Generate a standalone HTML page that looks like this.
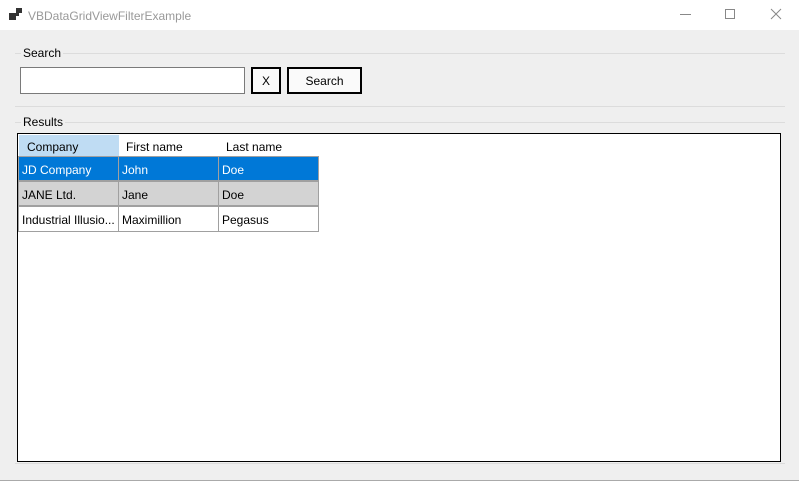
<!DOCTYPE html>
<html><head><style>
*{margin:0;padding:0;box-sizing:border-box}
body{width:799px;height:481px;background:#efefef;font-family:"Liberation Sans",sans-serif;font-size:12px;color:#000;position:relative;overflow:hidden}
.a{position:absolute}
.title{left:0;top:0;width:799px;height:30px;background:#fff}
.line{background:#dcdcdc;height:1px}
.cell{position:absolute;height:25px;line-height:26px;padding-left:3px;white-space:nowrap;overflow:hidden}
</style></head><body>
<div class="a title"></div>
<svg class="a" style="left:9px;top:8px" width="13" height="12"><rect x="0" y="5" width="7" height="7" fill="#333"/><rect x="7" y="0" width="6" height="5" fill="#333"/><rect x="7" y="5" width="3" height="3" fill="#333"/></svg>
<div class="a" style="left:28px;top:9px;color:#999;font-size:12px">VBDataGridViewFilterExample</div>
<div class="a" style="left:680px;top:14px;width:11px;height:1px;background:#888"></div>
<div class="a" style="left:725px;top:9px;width:10px;height:10px;border:1px solid #888"></div>
<svg class="a" style="left:770px;top:8px" width="12" height="12"><path d="M1 1L11 11M11 1L1 11" stroke="#888" stroke-width="1"/></svg>

<div class="a line" style="left:15px;top:53px;width:770px"></div>
<div class="a" style="left:21px;top:46px;background:#efefef;padding:0 2px">Search</div>
<div class="a" style="left:20px;top:67px;width:225px;height:27px;background:#fff;border:1px solid #7a7a7a"></div>
<div class="a" style="left:251px;top:67px;width:30px;height:27px;border:2px solid #000;text-align:center;line-height:25px;background:#fafafa">X</div>
<div class="a" style="left:287px;top:67px;width:75px;height:27px;border:2px solid #000;text-align:center;line-height:25px;background:#fafafa">Search</div>
<div class="a line" style="left:15px;top:106px;width:770px"></div>
<div class="a line" style="left:15px;top:122px;width:770px"></div>
<div class="a" style="left:21px;top:115px;background:#efefef;padding:0 2px">Results</div>

<div class="a" style="left:17px;top:133px;width:764px;height:329px;background:#fff;border:1px solid #000"></div>
<div class="a" style="left:19px;top:135px;width:100px;height:22px;background:#bfdcf3"></div>
<div class="a" style="left:27px;top:136px;line-height:22px">Company</div>
<div class="a" style="left:126px;top:136px;line-height:22px">First name</div>
<div class="a" style="left:226px;top:136px;line-height:22px">Last name</div>
<div class="a" style="left:18px;top:156px;width:301px;height:25px;background:#0078d7;border:1px solid #a0a0a0"></div>
<div class="a" style="left:18px;top:181px;width:301px;height:25px;background:#d3d3d3;border:1px solid #a0a0a0;border-top:none"></div>
<div class="a" style="left:18px;top:206px;width:301px;height:26px;background:#fff;border:1px solid #a0a0a0;border-top:1px solid #a0a0a0"></div>
<div class="a" style="left:118px;top:156px;width:1px;height:76px;background:#a0a0a0"></div>
<div class="a" style="left:218px;top:156px;width:1px;height:76px;background:#a0a0a0"></div>
<div class="a" style="left:18px;top:206px;width:301px;height:1px;background:#a0a0a0"></div>
<div class="a" style="left:18px;top:181px;width:301px;height:1px;background:#a0a0a0"></div>
<div class="cell" style="left:19px;top:157px;width:99px;color:#fff">JD Company</div>
<div class="cell" style="left:119px;top:157px;width:99px;color:#fff">John</div>
<div class="cell" style="left:219px;top:157px;width:99px;color:#fff">Doe</div>
<div class="cell" style="left:19px;top:182px;width:99px">JANE Ltd.</div>
<div class="cell" style="left:119px;top:182px;width:99px">Jane</div>
<div class="cell" style="left:219px;top:182px;width:99px">Doe</div>
<div class="cell" style="left:19px;top:207px;width:99px">Industrial Illusio...</div>
<div class="cell" style="left:119px;top:207px;width:99px">Maximillion</div>
<div class="cell" style="left:219px;top:207px;width:99px">Pegasus</div>

<div class="a line" style="left:15px;top:463px;width:770px"></div>
<div class="a" style="left:0;top:480px;width:799px;height:1px;background:#aaa"></div>
</body></html>
